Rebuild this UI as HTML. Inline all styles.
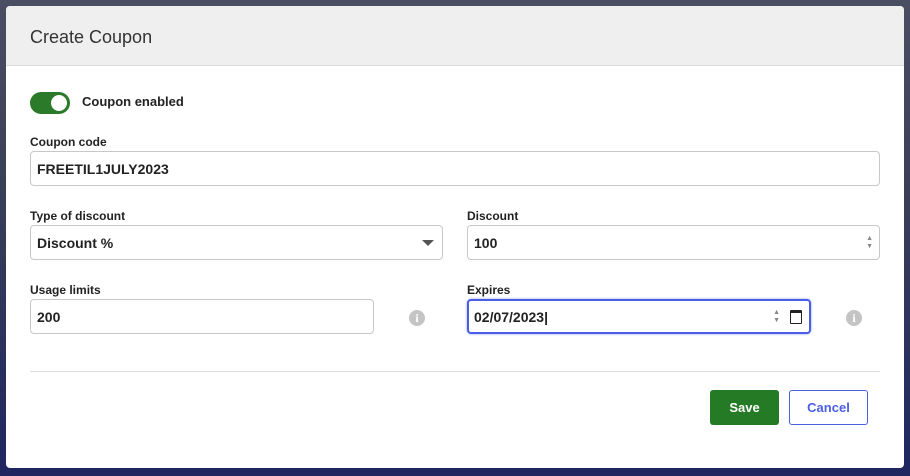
<!DOCTYPE html><html><head><style>
body{margin:0;width:910px;height:476px;background:#1e2557;font-family:"Liberation Sans",sans-serif;position:relative;overflow:hidden;color:#222}
.bg{position:absolute;inset:0;background:linear-gradient(180deg,#4a4e63 0,#3a3f58 40%,#1f2660 100%)}
.m{position:absolute;left:6px;top:6px;width:898px;height:462px;background:#fff;border-radius:4px;overflow:hidden}
.h{height:60px;background:#efefef;border-bottom:1px solid #ddd;box-sizing:border-box}
.h span{position:absolute;left:24px;top:21px;font-size:18px;color:#333}
.a{position:absolute}
.lbl{font-size:12px;font-weight:bold;color:#222}
.in{position:absolute;box-sizing:border-box;border:1px solid #c8c8c8;border-radius:4px;height:35px;font-size:14px;font-weight:bold;padding:9px 6px;color:#222}
.info{position:absolute;width:16px;height:16px;border-radius:50%;background:#c4c4c4;color:#fff;font-size:12px;font-weight:bold;text-align:center;line-height:16px;font-family:"Liberation Serif",serif}
</style></head><body><div class="bg"></div>
<div class="m">
<div class="h"><span>Create Coupon</span></div>
<div class="a" style="left:24px;top:86px;width:40px;height:22px;border-radius:11px;background:#2a7a2a"><div style="position:absolute;right:3px;top:3px;width:16px;height:16px;border-radius:50%;background:#fff"></div></div>
<div class="a" style="left:76px;top:88px;font-size:13px;font-weight:bold">Coupon enabled</div>
<div class="a lbl" style="left:24px;top:129px">Coupon code</div>
<div class="in" style="left:24px;top:145px;width:850px">FREETIL1JULY2023</div>
<div class="a lbl" style="left:24px;top:203px">Type of discount</div>
<div class="in" style="left:24px;top:219px;width:413px">Discount %<span style="position:absolute;right:8px;top:14px;border-left:6px solid transparent;border-right:6px solid transparent;border-top:6px solid #555"></span></div>
<div class="a lbl" style="left:461px;top:203px">Discount</div>
<div class="in" style="left:461px;top:219px;width:413px">100<span style="position:absolute;right:6px;top:9px;font-size:7px;color:#888;line-height:8px">▲<br>▼</span></div>
<div class="a lbl" style="left:24px;top:277px">Usage limits</div>
<div class="in" style="left:24px;top:293px;width:344px">200</div>
<div class="info" style="left:403px;top:304px">i</div>
<div class="a lbl" style="left:461px;top:277px">Expires</div>
<div class="in" style="left:461px;top:293px;width:344px;border:2px solid #4a5ee8;box-shadow:0 0 2px #8895f0;padding:8px 5px">02/07/2023|<span style="position:absolute;right:29px;top:8px;font-size:7px;color:#888;line-height:8px">▲<br>▼</span><span style="position:absolute;right:7px;top:9px;width:10px;height:10px;border:1.5px solid #222;border-top-width:3px;border-radius:1px"></span></div>
<div class="info" style="left:840px;top:304px">i</div>
<div class="a" style="left:24px;top:365px;width:850px;height:1px;background:#ddd"></div>
<div class="a" style="left:704px;top:384px;width:69px;height:35px;background:#257a25;border-radius:3px;color:#fff;font-size:13px;font-weight:bold;text-align:center;line-height:35px">Save</div>
<div class="a" style="left:783px;top:384px;width:79px;height:35px;box-sizing:border-box;border:1px solid #4a5ee8;border-radius:3px;color:#4a5ee8;font-size:13px;font-weight:bold;text-align:center;line-height:33px">Cancel</div>
</div></body></html>
